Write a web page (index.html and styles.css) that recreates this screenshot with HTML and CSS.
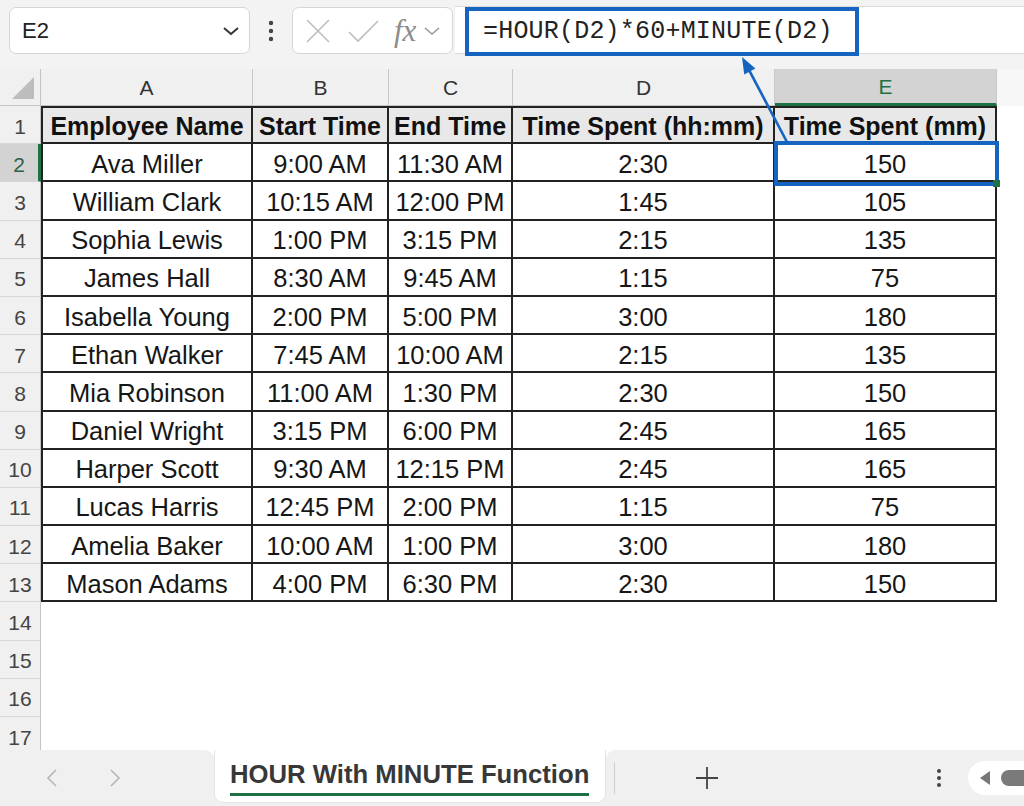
FILE: index.html
```html
<!DOCTYPE html>
<html>
<head>
<meta charset="utf-8">
<link rel="stylesheet" href="styles.css">
</head>
<body>
<div class="app">
  <div class="toolbar">
    <div class="namebox">
      <span class="ref">E2</span>
      <svg class="chev" width="18" height="10" viewBox="0 0 18 10"><path d="M2 2 L9 8 L16 2" fill="none" stroke="#333" stroke-width="2"/></svg>
    </div>
    <div class="more">
      <svg width="6" height="22" viewBox="0 0 6 22"><circle cx="3" cy="3" r="2.2" fill="#444"/><circle cx="3" cy="11" r="2.2" fill="#444"/><circle cx="3" cy="19" r="2.2" fill="#444"/></svg>
    </div>
    <div class="fxbox">
      <svg width="26" height="26" viewBox="0 0 26 26"><path d="M2 2 L24 24 M24 2 L2 24" stroke="#bdbdbd" stroke-width="1.6" fill="none"/></svg>
      <svg width="32" height="24" viewBox="0 0 32 24"><path d="M2 13 L11 22 L31 2" stroke="#bdbdbd" stroke-width="1.6" fill="none"/></svg>
      <span class="fx">fx</span>
      <svg width="16" height="10" viewBox="0 0 16 10"><path d="M1 2 L8 8 L15 2" fill="none" stroke="#9a9a9a" stroke-width="1.6"/></svg>
    </div>
    <div class="formula"><span class="ftext">=HOUR(D2)*60+MINUTE(D2)</span></div>
  </div>

  <div class="sheet">
    <div class="corner"><span class="tri"></span></div>
    <div class="ch">A</div>
    <div class="ch">B</div>
    <div class="ch">C</div>
    <div class="ch">D</div>
    <div class="ch sel">E</div>
    <div class="ch blank"></div>

    <div class="rh">1</div>
    <div class="c h l t">Employee Name</div>
    <div class="c h t">Start Time</div>
    <div class="c h t">End Time</div>
    <div class="c h t">Time Spent (hh:mm)</div>
    <div class="c h t">Time Spent (mm)</div>
    <div class="e"></div>

    <div class="rh rsel">2</div>
    <div class="c l">Ava Miller</div><div class="c">9:00 AM</div><div class="c">11:30 AM</div><div class="c">2:30</div><div class="c">150</div><div class="e"></div>

    <div class="rh">3</div>
    <div class="c l">William Clark</div><div class="c">10:15 AM</div><div class="c">12:00 PM</div><div class="c">1:45</div><div class="c">105</div><div class="e"></div>

    <div class="rh">4</div>
    <div class="c l">Sophia Lewis</div><div class="c">1:00 PM</div><div class="c">3:15 PM</div><div class="c">2:15</div><div class="c">135</div><div class="e"></div>

    <div class="rh">5</div>
    <div class="c l">James Hall</div><div class="c">8:30 AM</div><div class="c">9:45 AM</div><div class="c">1:15</div><div class="c">75</div><div class="e"></div>

    <div class="rh">6</div>
    <div class="c l">Isabella Young</div><div class="c">2:00 PM</div><div class="c">5:00 PM</div><div class="c">3:00</div><div class="c">180</div><div class="e"></div>

    <div class="rh">7</div>
    <div class="c l">Ethan Walker</div><div class="c">7:45 AM</div><div class="c">10:00 AM</div><div class="c">2:15</div><div class="c">135</div><div class="e"></div>

    <div class="rh">8</div>
    <div class="c l">Mia Robinson</div><div class="c">11:00 AM</div><div class="c">1:30 PM</div><div class="c">2:30</div><div class="c">150</div><div class="e"></div>

    <div class="rh">9</div>
    <div class="c l">Daniel Wright</div><div class="c">3:15 PM</div><div class="c">6:00 PM</div><div class="c">2:45</div><div class="c">165</div><div class="e"></div>

    <div class="rh">10</div>
    <div class="c l">Harper Scott</div><div class="c">9:30 AM</div><div class="c">12:15 PM</div><div class="c">2:45</div><div class="c">165</div><div class="e"></div>

    <div class="rh">11</div>
    <div class="c l">Lucas Harris</div><div class="c">12:45 PM</div><div class="c">2:00 PM</div><div class="c">1:15</div><div class="c">75</div><div class="e"></div>

    <div class="rh">12</div>
    <div class="c l">Amelia Baker</div><div class="c">10:00 AM</div><div class="c">1:00 PM</div><div class="c">3:00</div><div class="c">180</div><div class="e"></div>

    <div class="rh">13</div>
    <div class="c l">Mason Adams</div><div class="c">4:00 PM</div><div class="c">6:30 PM</div><div class="c">2:30</div><div class="c">150</div><div class="e"></div>

    <div class="rh">14</div><div class="empty"></div>
    <div class="rh">15</div><div class="empty"></div>
    <div class="rh">16</div><div class="empty"></div>
    <div class="rh">17</div><div class="empty"></div>
  </div>

  <div class="tabbar">
    <div class="tb-left">
      <svg width="12" height="18" viewBox="0 0 12 18"><path d="M10 1 L2 9 L10 17" fill="none" stroke="#b5b5b5" stroke-width="1.6"/></svg>
      <svg width="12" height="18" viewBox="0 0 12 18"><path d="M2 1 L10 9 L2 17" fill="none" stroke="#b5b5b5" stroke-width="1.6"/></svg>
    </div>
    <div class="tabwrap">
      <div class="tab"><span class="tabname">HOUR With MINUTE Function</span></div>
    </div>
    <div class="tb-right">
      <span class="sep"></span>
      <svg class="plus" width="24" height="24" viewBox="0 0 24 24"><path d="M12 1 V23 M1 12 H23" stroke="#444" stroke-width="1.8" fill="none"/></svg>
      <svg class="dots" width="6" height="20" viewBox="0 0 6 20"><circle cx="3" cy="3" r="2" fill="#444"/><circle cx="3" cy="10" r="2" fill="#444"/><circle cx="3" cy="17" r="2" fill="#444"/></svg>
      <div class="pill">
        <svg width="10" height="14" viewBox="0 0 10 14"><path d="M10 0 L0 7 L10 14 Z" fill="#777"/></svg>
        <span class="thumb"></span>
      </div>
    </div>
  </div>

  <div class="hl-formula"></div>
  <div class="hl-cell"></div>
  <div class="handle"></div>
  <svg class="arrow" width="1024" height="806" viewBox="0 0 1024 806">
    <line x1="787" y1="142" x2="749.6" y2="71.1" stroke="#1565c0" stroke-width="2.6"/>
    <polygon points="742,57 755.4,68.6 744.2,74.5" fill="#1565c0"/>
  </svg>
</div>
</body>
</html>
```
FILE: styles.css
```css
* { box-sizing: border-box; }
html, body { margin: 0; padding: 0; }
body {
  width: 1024px;
  height: 806px;
  overflow: hidden;
  background: #ffffff;
  font-family: "Liberation Sans", Arial, sans-serif;
  color: #111;
}
.app {
  position: relative;
  width: 1024px;
  height: 806px;
  overflow: hidden;
  display: flex;
  flex-direction: column;
}

/* toolbar */
.toolbar {
  height: 69px;
  flex: none;
  background: #f3f3f3;
  display: flex;
  align-items: flex-start;
  padding: 7px 0 0 9px;
}
.namebox {
  width: 241px;
  height: 47px;
  background: #fff;
  border: 1px solid #d6d6d6;
  border-radius: 7px;
  display: flex;
  align-items: center;
  justify-content: space-between;
  padding: 0 9px 0 12px;
}
.ref { font-size: 22px; color: #222; }
.more {
  width: 42px;
  height: 47px;
  display: flex;
  align-items: center;
  justify-content: center;
}
.fxbox {
  width: 161px;
  height: 47px;
  background: #fff;
  border: 1px solid #d6d6d6;
  border-radius: 7px;
  display: flex;
  align-items: center;
  padding: 0 0 0 12px;
}
.fxbox svg:nth-child(1) { margin-right: 16px; }
.fxbox svg:nth-child(2) { margin-right: 15px; }
.fx {
  font-family: "Liberation Serif", serif;
  font-style: italic;
  font-size: 31px;
  color: #8c8c8c;
  margin-right: 8px;
  line-height: 1;
}
.formula {
  flex: 1;
  height: 48px;
  margin-left: 2px;
  margin-top: -1px;
  background: #fff;
  border-top: 1px solid #d9d9d9;
  border-bottom: 1px solid #d9d9d9;
  display: flex;
  align-items: center;
  padding-left: 28px;
  padding-top: 2px;
}
.ftext {
  font-family: "Liberation Mono", monospace;
  font-size: 25px;
  color: #222;
  letter-spacing: 0.2px;
}

/* sheet grid */
.sheet {
  flex: 1;
  display: grid;
  grid-template-columns: 41px 212px 136px 124px 262px 222px 1fr;
  grid-template-rows: 37px repeat(17, 38.2px);
  overflow: hidden;
  background: #fff;
}
.corner {
  background: #f0f0f0;
  border-right: 1px solid #c4c4c4;
  border-bottom: 1px solid #c4c4c4;
  position: relative;
}
.tri {
  position: absolute;
  right: 6px;
  bottom: 6px;
  width: 0;
  height: 0;
  border-left: 22px solid transparent;
  border-bottom: 22px solid #bdbdbd;
}
.ch {
  background: #f0f0f0;
  border-right: 1px solid #c8c8c8;
  border-bottom: 1px solid #c4c4c4;
  display: flex;
  align-items: center;
  justify-content: center;
  font-size: 21px;
  color: #333;
  padding-top: 1px;
}
.ch.sel {
  background: #d3d3d3;
  color: #1e7145;
  border-bottom: 3px solid #1e7145;
}
.ch.blank {
  background: #f7f7f7;
  border-right: none;
  border-bottom: none;
}
.rh {
  grid-column: 1;
  background: #f0f0f0;
  border-right: 1px solid #c4c4c4;
  border-bottom: 1px solid #d6d6d6;
  display: flex;
  align-items: center;
  justify-content: center;
  font-size: 21px;
  color: #444;
  padding-top: 4px;
}
.rh.rsel {
  background: #d3d3d3;
  color: #2f5f47;
  border-right: 3px solid #1e7145;
}
.c {
  border-right: 2px solid #222;
  border-bottom: 2px solid #222;
  display: flex;
  align-items: center;
  justify-content: center;
  font-size: 25.5px;
  color: #161616;
  white-space: nowrap;
  padding-top: 4px;
}
.c.l { border-left: 2px solid #222; }
.c.t { border-top: 2px solid #222; padding-top: 2px; }
.c.h {
  background: #e8e8e8;
  font-weight: bold;
  font-size: 25px;
  color: #111;
}
.e { background: #fff; }
.empty { grid-column: 2 / 8; background: #fff; }

/* tab bar */
.tabbar {
  height: 56px;
  flex: none;
  background: #fff;
  display: flex;
  margin-top: auto;
}
.tb-left {
  width: 214px;
  background: #f0f0f0;
  border-top-right-radius: 9px;
  display: flex;
  align-items: center;
  padding: 0 0 0 46px;
  gap: 51px;
}
.tabwrap {
  width: 392px;
  background: #f0f0f0;
}
.tab {
  height: 53px;
  background: #fff;
  border-left: 1px solid #e4e4e4;
  border-right: 1px solid #e4e4e4;
  border-bottom: 1px solid #e4e4e4;
  border-radius: 0 0 9px 9px;
  padding: 10px 0 0 15px;
}
.tabname {
  display: inline-block;
  font-size: 25.7px;
  font-weight: bold;
  color: #383838;
  padding-bottom: 4px;
  border-bottom: 3px solid #1e7145;
  line-height: 29px;
}
.tb-right {
  flex: 1;
  background: #f0f0f0;
  border-top-left-radius: 9px;
  display: flex;
  align-items: center;
  padding-left: 8px;
}
.sep {
  width: 1px;
  height: 32px;
  background: #cfcfcf;
}
.plus { margin-left: 80px; }
.dots { margin-left: 217px; }
.pill {
  margin-left: 26px;
  height: 34px;
  flex: 1;
  background: #fff;
  border-radius: 17px 0 0 17px;
  display: flex;
  align-items: center;
  padding-left: 12px;
}
.thumb {
  margin-left: 11px;
  flex: 1;
  height: 16px;
  background: #7a7a7a;
  border-radius: 8px 0 0 8px;
}

/* overlays */
.hl-formula {
  position: absolute;
  left: 465px;
  top: 7px;
  width: 394px;
  height: 49px;
  border: 4px solid #1565c0;
}
.hl-cell {
  position: absolute;
  left: 774px;
  top: 141px;
  width: 225px;
  height: 45px;
  border: 4px solid #1565c0;
}
.handle {
  position: absolute;
  left: 993px;
  top: 180px;
  width: 7px;
  height: 7px;
  background: #1e7145;
}
.arrow {
  position: absolute;
  left: 0;
  top: 0;
  pointer-events: none;
}
```
